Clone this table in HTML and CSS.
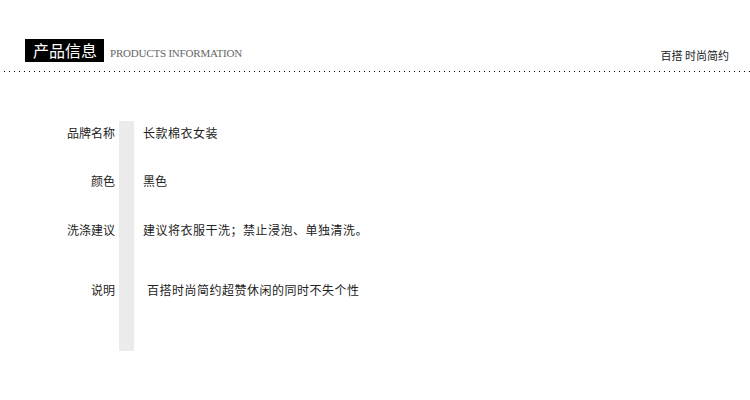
FILE: index.html
```html
<!DOCTYPE html>
<html lang="zh-CN">
<head>
<meta charset="utf-8">
<title>产品信息</title>
<link rel="stylesheet" href="styles.css">
</head>
<body>
<div class="header">
  <div class="title-wrap">
    <div class="title">产品信息</div>
    <div class="subtitle">PRODUCTS INFORMATION</div>
  </div>
  <div class="slogan">百搭 时尚简约</div>
</div>
<div class="dots"></div>
<div class="info">
  <div class="row r1">
    <div class="label">品牌名称</div>
    <div class="bar"></div>
    <div class="value wide">长款棉衣女装</div>
  </div>
  <div class="row r2">
    <div class="label">颜色</div>
    <div class="bar"></div>
    <div class="value">黑色</div>
  </div>
  <div class="row r3">
    <div class="label">洗涤建议</div>
    <div class="bar"></div>
    <div class="value wide">建议将衣服干洗；禁止浸泡、单独清洗。</div>
  </div>
  <div class="row r4">
    <div class="label">说明</div>
    <div class="bar"></div>
    <div class="value indent wide">百搭时尚简约超赞休闲的同时不失个性</div>
  </div>
</div>
</body>
</html>
```

FILE: styles.css
```css
html, body {
  margin: 0;
  padding: 0;
  background: #fff;
}
body {
  width: 750px;
  height: 400px;
  overflow: hidden;
  font-family: "Noto Sans CJK SC", "Noto Sans", sans-serif;
  font-size: 12px;
  color: #333;
}
.header {
  height: 71px;
  display: flex;
  justify-content: space-between;
  align-items: flex-end;
  box-sizing: border-box;
  padding: 0 21px 9px 25px;
}
.title-wrap {
  display: flex;
  align-items: flex-end;
}
.title {
  background: #000;
  color: #fff;
  font-size: 16px;
  height: 23px;
  line-height: 23px;
  padding: 0 3px 0 8px;
  width: 68px;
}
.subtitle {
  font-family: "Liberation Serif", serif;
  font-size: 11px;
  letter-spacing: -0.2px;
  color: #666;
  margin-left: 6px;
  line-height: 12px;
  padding-bottom: 3px;
}
.slogan {
  font-size: 11px;
  line-height: 12px;
  color: #222;
  position: relative;
  top: -1px;
}
.dots {
  height: 1px;
  background: repeating-linear-gradient(to right, #000 0 1px, transparent 1px 5px);
  background-position: 4px 0;
}
.info {
  margin-top: 49px;
}
.row {
  display: grid;
  grid-template-columns: 115px 4px 15px 9px 1fr;
}
.label {
  grid-column: 1;
  text-align: right;
  line-height: 12px;
  padding-top: 6px;
  color: #222;
}
.bar {
  grid-column: 3;
  background: #ebebeb;
}
.value {
  grid-column: 5;
  line-height: 12px;
  padding-top: 6px;
  color: #222;
}
.wide {
  letter-spacing: 0.5px;
}
.indent {
  padding-left: 4px;
}
.r1 { height: 48px; }
.r2 { height: 49px; }
.r3 { height: 60px; }
.r4 { height: 73px; }
```
